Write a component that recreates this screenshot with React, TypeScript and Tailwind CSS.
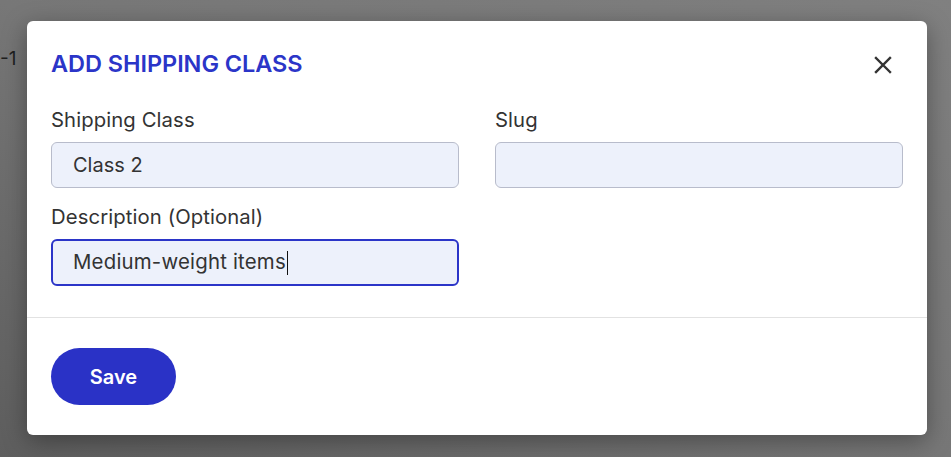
import React from 'react';

const CloseIcon = () => (
  <svg width="18" height="18" viewBox="0 0 18 18" fill="none" stroke="#333" strokeWidth={2.4} strokeLinecap="square">
    <path d="M2 2 L16 16 M16 2 L2 16" />
  </svg>
);

export default function App() {
  return (
    <div
      className="relative h-[457px] w-[951px] overflow-hidden bg-gradient-to-tr from-[#5e5e5e] via-[#777777] to-[#808080]"
      style={{ fontFamily: 'Inter, "Noto Sans", sans-serif' }}
    >
      {/* page behind the overlay */}
      <div className="absolute left-[0px] top-[45px] text-[19px] text-[#1f1f1f]">-1</div>

      <div className="absolute left-[27px] top-[21px] w-[900px] h-[414px] rounded-[6px] bg-white shadow-[0_6px_24px_rgba(0,0,0,0.35)] flex flex-col">
        {/* header */}
        <div className="flex justify-between px-6 pt-[28px] h-[86px] items-start">
          <h2 className="text-[23.5px] font-semibold leading-[30px] text-[#2b35c8] tracking-[-0.05px]">ADD SHIPPING CLASS</h2>
          <button className="mt-[7px] mr-[11px]">
            <CloseIcon />
          </button>
        </div>

        {/* form */}
        <div className="px-6 grid grid-cols-2 gap-x-9 text-[#333]">
          <div className="flex flex-col">
            <label className="text-[20.3px] leading-[24px] mt-[1px] tracking-[0.1px]">Shipping Class</label>
            <div className="mt-[10px] h-[46px] rounded-[6px] border border-[#b8bccb] bg-[#edf1fb] pl-[21px] flex items-center text-[20px]">
              Class 2
            </div>
          </div>
          <div className="flex flex-col">
            <label className="text-[20.3px] leading-[24px] mt-[1px] tracking-[0.1px]">Slug</label>
            <div className="mt-[10px] h-[46px] rounded-[6px] border border-[#b8bccb] bg-[#edf1fb]" />
          </div>
          <div className="flex flex-col mt-[17px]">
            <label className="text-[20.3px] leading-[24px] tracking-[0.1px]">Description (Optional)</label>
            <div className="mt-[10px] h-[47px] rounded-[6px] border-[2.5px] border-[#2b35c8] bg-[#edf1fb] pl-[20px] flex items-center text-[20.4px] tracking-[0.2px]">
              <span>Medium-weight items</span>
              <span className="ml-[1px] inline-block h-[24px] w-[1.5px] bg-[#111]" />
            </div>
          </div>
        </div>

        {/* footer */}
        <div className="mt-[31px] border-t border-[#e2e2e2] px-6 pt-[30px]">
          <button className="h-[57px] w-[125px] rounded-full bg-[#2a32c6] text-[20px] font-semibold text-white">
            Save
          </button>
        </div>
      </div>
    </div>
  );
}
